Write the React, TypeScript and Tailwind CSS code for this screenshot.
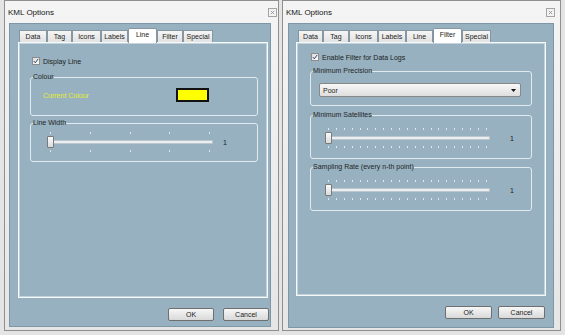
import React from 'react';

type Tab = { label: string; w: string };

const LEFT_TABS: Tab[] = [
  { label: 'Data', w: 'w-[28px]' },
  { label: 'Tag', w: 'w-[25px]' },
  { label: 'Icons', w: 'w-[29px]' },
  { label: 'Labels', w: 'w-[27px]' },
  { label: 'Line', w: 'w-[29px]' },
  { label: 'Filter', w: 'w-[26px]' },
  { label: 'Special', w: 'w-[30px]' },
];

const RIGHT_TABS: Tab[] = [
  { label: 'Data', w: 'w-[25px]' },
  { label: 'Tag', w: 'w-[26px]' },
  { label: 'Icons', w: 'w-[29px]' },
  { label: 'Labels', w: 'w-[28px]' },
  { label: 'Line', w: 'w-[27px]' },
  { label: 'Filter', w: 'w-[29px]' },
  { label: 'Special', w: 'w-[29px]' },
];

const CloseBox = () => (
  <span className="w-[9px] h-[9px] border border-[#a3a3a3] bg-[#f4f4f4] flex items-center justify-center">
    <svg width="5" height="5" viewBox="0 0 5 5">
      <path d="M0.8 0.8 L4.2 4.2 M4.2 0.8 L0.8 4.2" stroke="#8a8a8a" strokeWidth="0.8" />
    </svg>
  </span>
);

const TabStrip = ({ tabs, active, className }: { tabs: Tab[]; active: string; className: string }) => (
  <div className={`relative z-10 flex items-end h-[15px] -mb-px ${className}`}>
    {tabs.map((t) =>
      t.label === active ? (
        <div
          key={t.label}
          className={`${t.w} h-[15px] bg-white border border-b-0 border-[#8797a1] rounded-t-[2px] flex justify-center pt-[1px] leading-[9px]`}
        >
          {t.label}
        </div>
      ) : (
        <div
          key={t.label}
          className={`${t.w} h-[12px] mb-px bg-gradient-to-b from-[#f5f5f5] to-[#e2e2e2] border border-b-0 border-[#8797a1] flex items-center justify-center leading-none`}
        >
          {t.label}
        </div>
      )
    )}
  </div>
);

const Check = ({ label }: { label: string }) => (
  <div className="flex items-center h-[10px] gap-[3px]">
    <span className="w-[8px] h-[8px] border border-[#8c8c8c] bg-gradient-to-br from-[#d8dcde] to-white flex items-center justify-center">
      <svg width="6" height="6" viewBox="0 0 6 6">
        <path d="M0.8 3.1 L2.3 4.8 L5.2 0.9" stroke="#34445f" strokeWidth="1" fill="none" />
      </svg>
    </span>
    <span className="leading-none">{label}</span>
  </div>
);

const Slider = ({ w, ticks }: { w: string; ticks: number }) => {
  const marks = Array.from({ length: ticks }, (_, i) => i);
  const row = (
    <div className="flex justify-between px-[3px] h-[2px]">
      {marks.map((i) => (
        <span key={i} className="w-px h-[2px] bg-[#dde7ec]" />
      ))}
    </div>
  );
  return (
    <div className={`relative flex flex-col h-[20px] ${w}`}>
      {row}
      <div className="mt-[6px] h-[4px] bg-[#eceff1] border border-[#bac6cc] rounded-[1px]" />
      <div className="mt-[6px]">{row}</div>
      <div className="absolute left-0 top-[4px] w-[7px] h-[12px] rounded-[1px] border border-[#7a7a7a] bg-gradient-to-b from-[#fbfbfb] to-[#dadada]" />
    </div>
  );
};

const Group = ({ title, className, children }: { title: string; className: string; children: React.ReactNode }) => (
  <fieldset className={`border border-[#e2eaee] rounded-[3px] ${className}`}>
    <legend className="ml-[2px] px-0 leading-[10px] font-normal text-[#262626]">{title}</legend>
    {children}
  </fieldset>
);

const Btn = ({ label, w }: { label: string; w: string }) => (
  <button className={`${w} h-[13px] border border-[#6f6f6f] rounded-[2px] bg-gradient-to-b from-[#f7f7f7] to-[#d9d9d9] text-[7px] leading-none text-[#1c1c1c]`}>
    {label}
  </button>
);

const Window = ({
  className,
  titlePad,
  bodyClass,
  children,
}: {
  className: string;
  titlePad: string;
  bodyClass: string;
  children: React.ReactNode;
}) => (
  <div className={`flex flex-col h-[331px] border border-[#8f8f8f] bg-gradient-to-b from-[#f4f4f4] to-[#e6e6e6] ${className}`}>
    <div className={`h-[22px] flex items-center justify-between pl-[3px] text-[8px] text-[#141414] ${titlePad}`}>
      <span className="pt-[2px]">KML Options</span>
      <CloseBox />
    </div>
    <div className={`flex-1 flex flex-col border border-[#7e97a5] bg-[#97b1c0] ${bodyClass}`}>{children}</div>
  </div>
);

export default function App() {
  return (
    <div className="w-[565px] h-[335px] overflow-hidden bg-[#e4e4e4] flex items-start font-['Liberation_Sans',Arial,sans-serif] text-[7px] text-[#1c1c1c]">
      <Window className="ml-[4px] w-[275px]" titlePad="pr-[1px]" bodyClass="ml-[4px] mr-[7px] mb-[3px]">
        <TabStrip tabs={LEFT_TABS} active="Line" className="mt-[4px] ml-[9px]" />
        <div className="flex-1 ml-[8px] mr-[2px] border border-[#f6f9fa] shadow-[inset_0_0_0_1px_#c3d3dc] flex flex-col pt-[13px] pl-[11px] pr-[9px]">
          <div className="pl-[2px]">
            <Check label="Display Line" />
          </div>
          <Group title="Colour" className="mt-[6px]">
            <div className="flex items-center pt-[6px] pb-[13px] pl-[12px]">
              <span className="w-[133px] text-[#e4ee2e] leading-none">Current Colour</span>
              <span className="w-[33px] h-[14px] border-2 border-[#111] bg-[#ffff00]" />
            </div>
          </Group>
          <Group title="Line Width" className="mt-[2px]">
            <div className="flex items-center pt-[4px] pb-[9px] pl-[16px]">
              <Slider w="w-[166px]" ticks={5} />
              <span className="ml-[10px] leading-none">1</span>
            </div>
          </Group>
        </div>
        <div className="flex justify-end gap-[9px] pt-[10px] pb-[5px] pr-px">
          <Btn label="OK" w="w-[46px]" />
          <Btn label="Cancel" w="w-[46px]" />
        </div>
      </Window>

      <Window className="ml-[3px] w-[279px]" titlePad="pr-[5px]" bodyClass="ml-[5px] mr-[6px] mb-[2px]">
        <TabStrip tabs={RIGHT_TABS} active="Filter" className="mt-[4px] ml-[9px]" />
        <div className="flex-1 ml-[7px] mr-[7px] border border-[#f6f9fa] shadow-[inset_0_0_0_1px_#c3d3dc] flex flex-col pt-[9px] pl-[13px] pr-[13px]">
          <div className="pl-px">
            <Check label="Enable Filter for Data Logs" />
          </div>
          <Group title="Minimum Precision" className="mt-[4px]">
            <div className="pt-[7px] pb-[8px] pl-[8px] pr-[10px]">
              <div className="h-[14px] border border-[#888] rounded-[2px] bg-gradient-to-b from-[#f8f8f8] to-[#dedede] flex items-center justify-between pl-[3px] pr-[4px]">
                <span className="leading-none">Poor</span>
                <svg width="5" height="3" viewBox="0 0 5 3">
                  <path d="M0 0 H5 L2.5 3 Z" fill="#111" />
                </svg>
              </div>
            </div>
          </Group>
          <Group title="Minimum Satellites" className="mt-[4px]">
            <div className="flex items-center pt-[8px] pb-[10px] pl-[14px]">
              <Slider w="w-[165px]" ticks={21} />
              <span className="ml-[20px] leading-none">1</span>
            </div>
          </Group>
          <Group title="Sampling Rate (every n-th point)" className="mt-[3px]">
            <div className="flex items-center pt-[8px] pb-[10px] pl-[14px]">
              <Slider w="w-[165px]" ticks={21} />
              <span className="ml-[20px] leading-none">1</span>
            </div>
          </Group>
        </div>
        <div className="flex justify-end gap-[6px] pt-[10px] pb-[8px] pr-[8px]">
          <Btn label="OK" w="w-[47px]" />
          <Btn label="Cancel" w="w-[47px]" />
        </div>
      </Window>
    </div>
  );
}
